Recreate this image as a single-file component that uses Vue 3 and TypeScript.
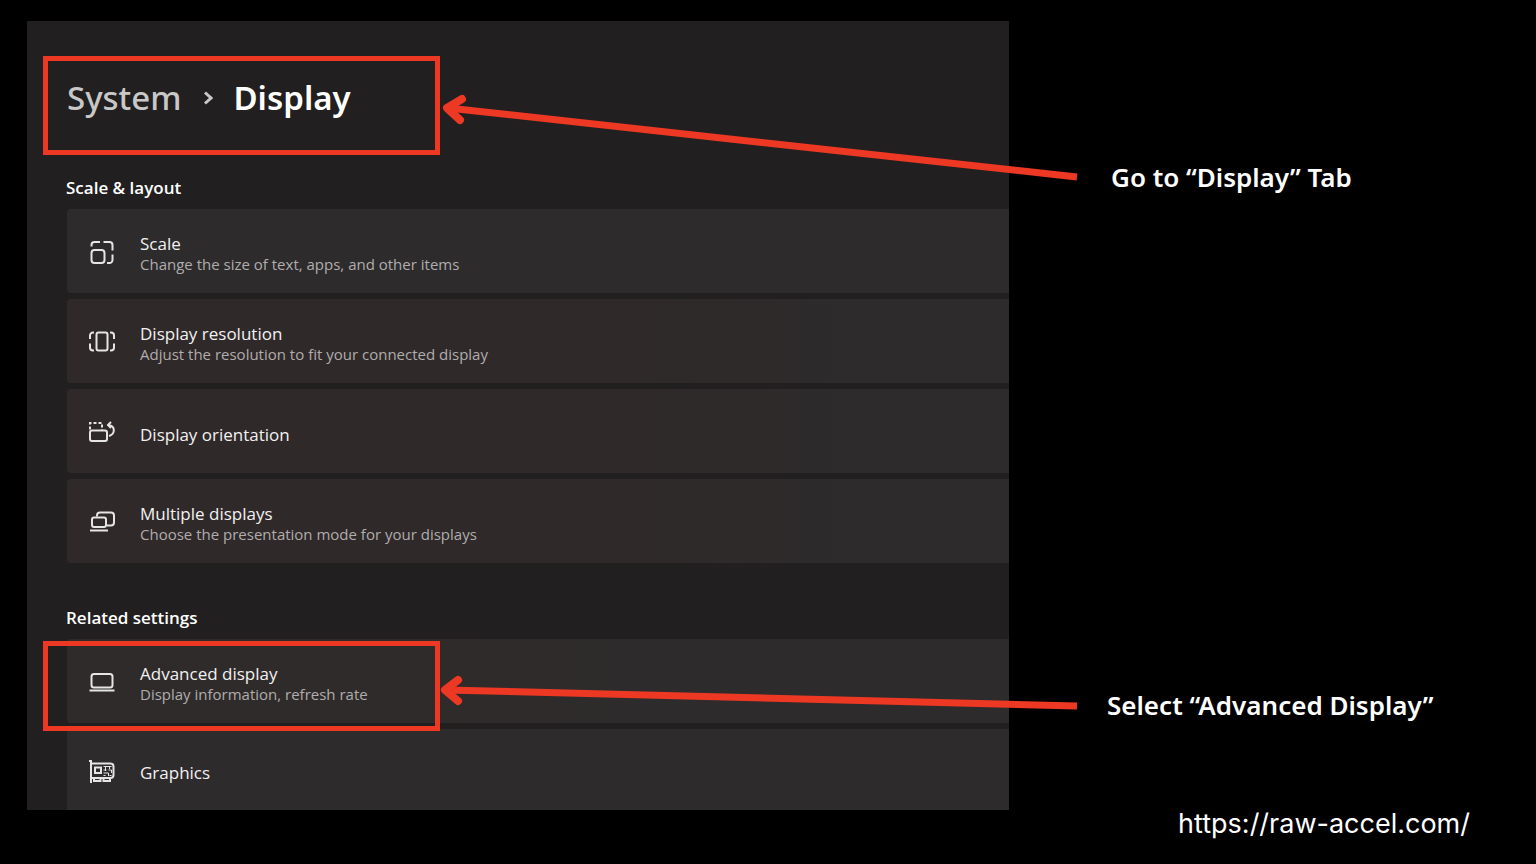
<script setup lang="ts">
type IconName = 'scale' | 'resolution' | 'orientation' | 'multiple' | 'laptop' | 'graphics'

interface Setting {
  icon: IconName
  title: string
  description?: string
  tone: 'warm' | 'mixed' | 'neutral'
  highlighted?: boolean
}

interface Section {
  id: string
  heading: string
  settings: Setting[]
}

const sections: Section[] = [
  {
    id: 'scale-layout',
    heading: 'Scale & layout',
    settings: [
      { icon: 'scale', title: 'Scale', description: 'Change the size of text, apps, and other items', tone: 'neutral' },
      { icon: 'resolution', title: 'Display resolution', description: 'Adjust the resolution to fit your connected display', tone: 'warm' },
      { icon: 'orientation', title: 'Display orientation', tone: 'warm' },
      { icon: 'multiple', title: 'Multiple displays', description: 'Choose the presentation mode for your displays', tone: 'warm' },
    ],
  },
  {
    id: 'related',
    heading: 'Related settings',
    settings: [
      { icon: 'laptop', title: 'Advanced display', description: 'Display information, refresh rate', tone: 'mixed', highlighted: true },
      { icon: 'graphics', title: 'Graphics', tone: 'neutral' },
    ],
  },
]
</script>

<template>
  <div class="page">
    <main class="panel">
      <nav class="breadcrumb" aria-label="Breadcrumb">
        <a class="crumb" href="#system">System</a>
        <svg class="chevron" viewBox="0 0 10 16" aria-hidden="true"><path d="M2 2.500l6 5.500-6 5.500" /></svg>
        <h1 class="current">Display</h1>
      </nav>

      <section v-for="section in sections" :key="section.id" class="section" :class="section.id">
        <h2 class="heading">{{ section.heading }}</h2>
        <button
          v-for="item in section.settings"
          :key="item.title"
          type="button"
          class="row"
          :class="[item.tone, { highlighted: item.highlighted }]"
        >
          <svg class="icon" viewBox="0 0 28 28" aria-hidden="true">
            <template v-if="item.icon === 'scale'">
              <rect x="3.500" y="12" width="13" height="13" rx="3" />
              <path d="M3.500 8.500V7a3 3 0 0 1 3-3H12M15.500 4h6a3 3 0 0 1 3 3v5.500M24.500 16.500v5.500a3 3 0 0 1-3 3H19" />
            </template>
            <template v-else-if="item.icon === 'resolution'">
              <rect x="8.500" y="4.500" width="11" height="18" rx="2" />
              <path d="M6 4.500H5a3 3 0 0 0-3 3V11M2 15.500v4a3 3 0 0 0 3 3h1M22 4.500h1a3 3 0 0 1 3 3V11M26 15.500v4a3 3 0 0 1-3 3h-1" />
            </template>
            <template v-else-if="item.icon === 'orientation'">
              <rect x="2" y="12.500" width="17" height="10.500" rx="2" />
              <path class="dotted" d="M2 11.500V5h12v7" />
              <path d="M20.500 7c7 1 7 9 .5 11" />
              <path d="M23 4l-3 3 3 3" />
            </template>
            <template v-else-if="item.icon === 'multiple'">
              <path d="M9 8.500V7.500a3 3 0 0 1 3-3h11a3 3 0 0 1 3 3v7a3 3 0 0 1-3 3h-4" />
              <rect x="4" y="9.500" width="14" height="9.500" rx="2" />
              <path d="M2 22.500h18" />
            </template>
            <template v-else-if="item.icon === 'laptop'">
              <rect x="3.500" y="6" width="21" height="13.500" rx="2.500" />
              <path d="M1.500 22.500h25" />
            </template>
            <template v-else>
              <path d="M1 4h2v22M3.500 6.500h19a3 3 0 0 1 3 3v8.500a3 3 0 0 1-3 3h-19" />
              <rect x="7" y="10.500" width="6" height="5.500" />
              <path class="thin" d="M15.500 9.500h8M15.500 13h3M20.500 13h3v3M15.500 16h5v3M15.500 18.500h2M21.500 18.500h2M17.500 9v5M21.500 9v3" />
              <path d="M6 21v3h6.500v-3M15.500 21v3h6.500v-3" />
            </template>
          </svg>
          <span class="text">
            <span class="title">{{ item.title }}</span>
            <span v-if="item.description" class="description">{{ item.description }}</span>
          </span>
        </button>
      </section>
    </main>

    <aside class="notes">
      <p class="note">Go to “Display” Tab</p>
      <p class="note second">Select “Advanced Display”</p>
      <a class="site" href="https://raw-accel.com/">https://raw-accel.com/</a>
    </aside>

    <svg class="arrows" viewBox="0 0 1536 864" aria-hidden="true">
      <path d="M1077 177L448 108" />
      <path class="head" d="M462 99L447 108L460 120" />
      <path d="M1077 706L446 690" />
      <path class="head" d="M458 680L445 690L458 701" />
    </svg>
  </div>
</template>

<style>
body {
  margin: 0;
  background: #000;
}
</style>

<style scoped>
.page {
  position: relative;
  display: grid;
  grid-template-columns: 982fr 527fr;
  box-sizing: border-box;
  min-height: 100vh;
  padding: 21px 0 0 27px;
  background: #000;
  color: #fff;
  font-family: "Open Sans", "Noto Sans", sans-serif;
}

.panel {
  align-self: start;
  box-sizing: border-box;
  padding: 35px 0 0 16px;
  background: #211f20;
}

.breadcrumb {
  display: flex;
  align-items: center;
  box-sizing: border-box;
  width: 397px;
  height: 99px;
  padding: 0 19px 16px;
  border: 5px solid #ed3823;
  font-family: "Noto Sans", "Open Sans", sans-serif;
  font-size: 33px;
  line-height: 48px;
}

.crumb {
  color: #c9c8c8;
  font-weight: 500;
  text-decoration: none;
}

.chevron {
  width: 10px;
  height: 16px;
  margin: 0 20px 0 22px;
  fill: none;
  stroke: #c9c8c8;
  stroke-width: 3;
}

.current {
  margin: 0;
  font-size: 33px;
  font-weight: 600;
}

.section {
  display: flex;
  flex-direction: column;
  gap: 6px;
  padding: 19px 0 0 24px;
}

.section.related {
  padding-top: 41px;
}

.heading {
  margin: 0 0 2px -1px;
  font-size: 17px;
  font-weight: 600;
  line-height: 27px;
}

.row {
  position: relative;
  display: flex;
  align-items: center;
  gap: 24px;
  min-height: 84px;
  padding: 2px 0 0 21px;
  border: 0;
  border-radius: 4px 0 0 4px;
  color: #f2f1f1;
  font-family: inherit;
  text-align: left;
}

.row.warm {
  background: linear-gradient(90deg, #2f2929 60%, #2d2b2c 85%);
}

.row.mixed {
  background: linear-gradient(90deg, #2f2b2b 40%, #2d2b2c 70%);
}

.row.neutral {
  background: #2d2b2c;
}

.related .row:last-child {
  min-height: 81px;
  border-radius: 4px 0 0 0;
}

.icon {
  flex: none;
  width: 28px;
  height: 28px;
  fill: none;
  stroke: #e6e4e4;
  stroke-width: 2;
}

.icon .dotted {
  stroke-dasharray: 3 2;
}

.icon .thin {
  stroke-width: 1;
}

.text {
  display: flex;
  flex-direction: column;
  padding-top: 4px;
}

.title {
  font-size: 17px;
  line-height: 21px;
}

.description {
  color: #b0adad;
  font-size: 15px;
  line-height: 21px;
}

.highlighted::after {
  content: "";
  position: absolute;
  z-index: 1;
  top: 2px;
  left: -24px;
  box-sizing: border-box;
  width: 397px;
  height: 90px;
  border: 5px solid #ed3823;
}

.notes {
  display: flex;
  flex-direction: column;
  padding: 138px 0 20px 98px;
  font-family: "Noto Sans", "Open Sans", sans-serif;
}

.note {
  margin: 0 0 0 4px;
  font-size: 26px;
  font-weight: 600;
  line-height: 36px;
}

.note.second {
  margin: 492px 0 0;
}

.site {
  align-self: flex-end;
  margin: auto 66px 0 0;
  color: #fff;
  font-family: Inter, "Open Sans", sans-serif;
  font-size: 27px;
  line-height: 40px;
  text-decoration: none;
}

.arrows {
  position: absolute;
  top: 0;
  left: 0;
  width: 100%;
  fill: none;
  stroke: #ed3823;
  stroke-width: 7;
  pointer-events: none;
}

.arrows .head {
  stroke-width: 8;
  stroke-linecap: round;
  stroke-linejoin: round;
}
</style>
